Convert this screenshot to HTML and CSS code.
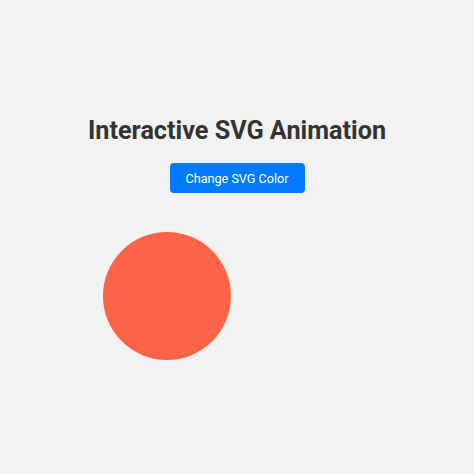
FILE: index.html
```html
<!DOCTYPE html>
<html>
<head>
<meta charset="utf-8">
<link rel="stylesheet" href="styles.css">
</head>
<body>
<div class="page">
  <h2 class="title">Interactive SVG Animation</h2>
  <button class="btn">Change SVG Color</button>
  <div class="stage">
    <svg class="shape" width="128" height="128" viewBox="0 0 128 128">
      <circle cx="64" cy="64" r="64" fill="#ff6347"/>
    </svg>
  </div>
</div>
</body>
</html>
```
FILE: styles.css
```css
html, body {
  margin: 0;
  padding: 0;
  background: #f2f2f2;
}
body {
  font-family: Roboto, "Liberation Sans", sans-serif;
  color: #333;
}
.page {
  display: flex;
  flex-direction: column;
  align-items: center;
  padding-top: 116px;
}
.title {
  margin: 0;
  font-size: 25.2px;
  font-weight: 700;
  line-height: 29px;
  color: #333;
}
.btn {
  margin-top: 18px;
  width: 135px;
  height: 30px;
  padding: 0;
  border: none;
  border-radius: 4px;
  background: #007bff;
  color: #fff;
  font-family: Roboto, "Liberation Sans", sans-serif;
  font-size: 12.6px;
}
.stage {
  align-self: stretch;
  padding-left: 103px;
  margin-top: 39px;
}
.shape {
  display: block;
}
```
